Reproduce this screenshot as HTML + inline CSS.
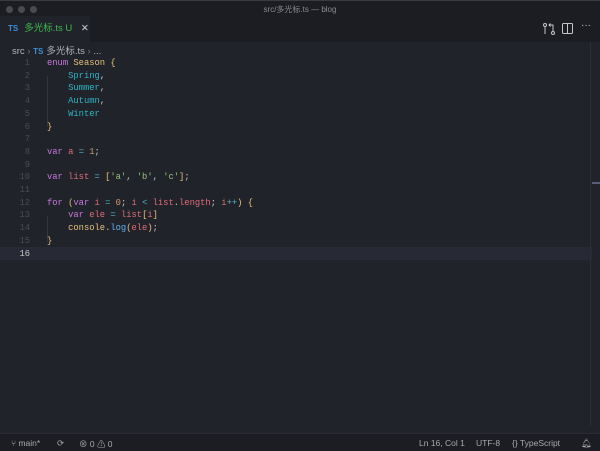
<!DOCTYPE html>
<html><head><meta charset="utf-8"><style>
*{margin:0;padding:0;box-sizing:border-box}
body{width:600px;height:451px;background:#21232a;font-family:"Liberation Sans","Noto Sans CJK SC",sans-serif;position:relative;overflow:hidden;color:#c8c8c8}
.title{position:absolute;top:0;left:0;width:600px;height:16px;background:#1c1d22;border-top:1px solid #3a3b40}
.title .t{position:absolute;top:3px;width:600px;text-align:center;font-size:8px;color:#8a8b90}
.dot{position:absolute;top:5px;width:7px;height:7px;border-radius:50%;background:#4a4b50}
.tabs{position:absolute;top:16px;left:0;width:600px;height:26px;background:#1c1d22}
.tab{position:absolute;left:0;top:0;width:90px;height:26px;background:#21232a;font-size:9.5px;line-height:26px;padding-left:8px;color:#3fb950}
.ts{color:#3b8fd6;font-weight:bold;font-size:8px;margin-right:6px}
.crumb{position:absolute;top:43px;left:12px;font-size:9.5px;color:#b5b5b8}
.code{position:absolute;top:58px;left:0;font-family:"Liberation Mono","Noto Sans CJK SC",monospace;font-size:8.8px}
.ln{position:absolute;left:0;width:30px;text-align:right;color:#4a4c55}
.l{position:absolute;left:47px;white-space:pre;color:#c8c8c8}
.k{color:#c678dd}.ty{color:#e5c07b}.c{color:#2bb5c5}.v{color:#e06c75}.n{color:#d19a66}.s{color:#98c379}.o{color:#56b6c2}.f{color:#61afef}.y{color:#e5c07b}
.guide{position:absolute;left:47px;width:1px;background:#33353d}
.status{position:absolute;bottom:0;left:0;width:600px;height:18px;background:#1c1d22;border-top:1px solid #2a2b30;font-size:8.5px;color:#a8a9ad}
.status span{position:absolute;top:4px}
</style></head><body>
<div class="title"><div class="dot" style="left:6px"></div><div class="dot" style="left:18px"></div><div class="dot" style="left:30px"></div><div class="t">src/多光标.ts — blog</div></div>
<div class="tabs"><div class="tab"><span class="ts">TS</span>多光标.ts U <span style="color:#ccc;margin-left:6px">✕</span></div>
<svg style="position:absolute;left:542px;top:6px" width="14" height="14" viewBox="0 0 14 14" fill="none" stroke="#c5c5c5" stroke-width="1"><circle cx="3" cy="3" r="1.5"/><circle cx="11" cy="11" r="1.5"/><path d="M3 4.5V12M11 9.5V3H7M8.5 1.5L7 3l1.5 1.5"/></svg>
<svg style="position:absolute;left:562px;top:7px" width="11" height="11" viewBox="0 0 11 11" fill="none" stroke="#c5c5c5"><rect x="0.5" y="0.5" width="10" height="10" rx="1"/><path d="M5.5 0.5v10"/></svg>
<span style="position:absolute;left:581px;top:4px;font-size:10px;color:#c5c5c5">···</span></div>
<div class="crumb">src <span style="color:#777">›</span> <span class="ts" style="margin-right:3px">TS</span>多光标.ts <span style="color:#777">›</span> ...</div>
<div style="position:absolute;left:0;top:247px;width:592px;height:13px;background:#272934"></div>
<div class="guide" style="top:76px;height:51px"></div>
<div class="guide" style="top:216px;height:26px"></div>
<div style="position:absolute;left:590px;top:42px;width:1px;height:384px;background:#2c2e35"></div>
<div style="position:absolute;left:592px;top:182px;width:8px;height:2px;background:#5a5d78"></div>
<div class="code">
<div class="ln" style="top:0">1</div><div class="l" style="top:0"><span class="k">enum</span> <span class="ty">Season</span> <span class="y">{</span></div>
<div class="ln" style="top:12.7px">2</div><div class="l" style="top:12.7px">    <span class="c">Spring</span>,</div>
<div class="ln" style="top:25.4px">3</div><div class="l" style="top:25.4px">    <span class="c">Summer</span>,</div>
<div class="ln" style="top:38.1px">4</div><div class="l" style="top:38.1px">    <span class="c">Autumn</span>,</div>
<div class="ln" style="top:50.8px">5</div><div class="l" style="top:50.8px">    <span class="c">Winter</span></div>
<div class="ln" style="top:63.5px">6</div><div class="l" style="top:63.5px"><span class="y">}</span></div>
<div class="ln" style="top:76.2px">7</div>
<div class="ln" style="top:88.9px">8</div><div class="l" style="top:88.9px"><span class="k">var</span> <span class="v">a</span> <span class="o">=</span> <span class="n">1</span>;</div>
<div class="ln" style="top:101.6px">9</div>
<div class="ln" style="top:114.3px">10</div><div class="l" style="top:114.3px"><span class="k">var</span> <span class="v">list</span> <span class="o">=</span> <span class="y">[</span><span class="s">'a'</span>, <span class="s">'b'</span>, <span class="s">'c'</span><span class="y">]</span>;</div>
<div class="ln" style="top:127px">11</div>
<div class="ln" style="top:139.7px">12</div><div class="l" style="top:139.7px"><span class="k">for</span> <span class="y">(</span><span class="k">var</span> <span class="v">i</span> <span class="o">=</span> <span class="n">0</span>; <span class="v">i</span> <span class="o">&lt;</span> <span class="v">list</span>.<span class="v">length</span>; <span class="v">i</span><span class="o">++</span><span class="y">)</span> <span class="y">{</span></div>
<div class="ln" style="top:152.4px">13</div><div class="l" style="top:152.4px">    <span class="k">var</span> <span class="v">ele</span> <span class="o">=</span> <span class="v">list</span><span class="y">[</span><span class="v">i</span><span class="y">]</span></div>
<div class="ln" style="top:165.1px">14</div><div class="l" style="top:165.1px">    <span class="ty">console</span>.<span class="f">log</span><span class="y">(</span><span class="v">ele</span><span class="y">)</span>;</div>
<div class="ln" style="top:177.8px">15</div><div class="l" style="top:177.8px"><span class="y">}</span></div>
<div class="ln" style="top:190.5px;color:#c8c8c8">16</div>
</div>
<div class="status">
<span style="left:11px">⑂ main*</span><span style="left:57px">⟳</span><span style="left:79px">⊗ 0 ⚠ 0</span>
<span style="left:419px">Ln 16, Col 1</span><span style="left:476px">UTF-8</span><span style="left:512px">{} TypeScript</span><span style="left:581px">🔔︎</span>
</div>
</body></html>
